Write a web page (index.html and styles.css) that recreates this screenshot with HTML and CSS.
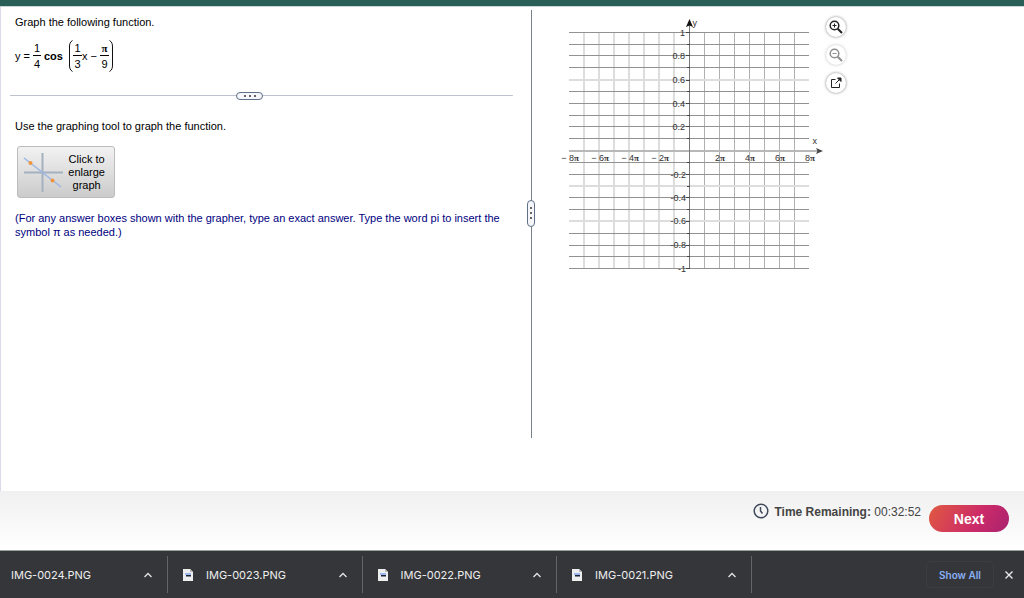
FILE: index.html
```html
<!DOCTYPE html>
<html lang="en">
<head>
    <meta charset="UTF-8">
    <meta name="viewport" content="width=device-width, initial-scale=1.0">
    <title>Graph the following function</title>
    <link rel="stylesheet" href="styles.css">
</head>
<body>
    <div class="topbar"></div>

    <main class="main">
        <section class="question">
            <p class="prompt">Graph the following function.</p>
            <div class="formula">
                <span>y =</span>
                <span class="frac"><span>1</span><span class="den">4</span></span>
                <b>cos</b>
                <span class="group">
                    <svg class="paren" viewBox="0 0 5 32"><path d="M4.5 .5C2 2 1.5 4 1.5 7v18c0 3 .5 5 3 6.500"/></svg>
                    <span class="frac"><span>1</span><span class="den">3</span></span>
                    <span>x −</span>
                    <span class="frac last"><span class="pi">π</span><span class="den">9</span></span>
                    <svg class="paren" viewBox="0 0 5 32"><path d="M.5 .5C3 2 3.500 4 3.500 7v18c0 3-.5 5-3 6.500"/></svg>
                </span>
            </div>

            <div class="split">
                <button class="handle" aria-label="Expand"><i></i><i></i><i></i></button>
            </div>

            <p class="prompt">Use the graphing tool to graph the function.</p>
            <button class="enlarge">
                <svg width="40" height="40" viewBox="0 0 40 40">
                    <path d="M19.500 1v39M1 20.500h39" stroke="#a3b1bf" stroke-width="2"/>
                    <path d="M1 6l37 29" stroke="#9db6e6" stroke-width="1.500"/>
                    <circle cx="7.500" cy="11" r="2" fill="#f0953a"/>
                    <circle cx="29.500" cy="28.500" r="2" fill="#f0953a"/>
                </svg>
                <span>Click to<br>enlarge<br>graph</span>
            </button>
            <p class="note">(For any answer boxes shown with the grapher, type an exact answer. Type the word pi to insert the symbol π as needed.)</p>
        </section>

        <div class="divider">
            <button class="handle vertical" aria-label="Resize panels"><i></i><i></i><i></i></button>
        </div>

        <section class="graph-panel">
            <svg class="graph" width="275" height="262" viewBox="555 14 275 262">
                <!-- vertical grid lines -->
                <path class="grid-soft" d="M584 32v236M599 32v236M614 32v236M629 32v236M644 32v236M659 32v236M674 32v236"/>
                <path class="grid-v" d="M704.500 32v236M719.500 32v236M734.500 32v236M749.500 32v236M764.500 32v236M779.500 32v236M794.500 32v236"/>
                <!-- horizontal grid lines -->
                <path class="grid-h" d="M569 32.500h240M569 44.500h240M569 55.500h240M569 67.500h240M569 91.500h240M569 103.500h240M569 115.500h240M569 126.500h240M569 138.500h240M569 162.500h240M569 174.500h240M569 197.500h240M569 209.500h240M569 233.500h240M569 245.500h240M569 256.500h240M569 268.500h240"/>
                <path class="grid-soft" d="M569 80h240M569 186h240M569 221h240"/>
                <!-- axes -->
                <path class="axis-x" d="M569 151h250"/>
                <path class="axis-y" d="M689.500 24v244"/>
                <path class="tick" d="M686 32.500h4M686 55.500h4M686 80.500h4M686 103.500h4M686 126.500h4M686 174.500h4M686 197.500h4M686 221.500h4M686 245.500h4M686 268.500h4M687 44.500h3M687 67.500h3M687 91.500h3M687 115.500h3M687 138.500h3M687 162.500h3M687 186.500h3M687 209.500h3M687 233.500h3M687 256.500h3"/>
                <path d="M689.500 19l-3.500 8 3.500-1.500 3.500 1.500z" fill="#111"/>
                <path d="M823 151l-7-3 1.500 3-1.500 3z" fill="#444"/>
                <g class="label-y">
                    <text x="685" y="36">1</text>
                    <text x="685" y="59">0.8</text>
                    <text x="685" y="83">0.6</text>
                    <text x="685" y="107">0.4</text>
                    <text x="685" y="130">0.2</text>
                    <text x="686" y="178">-0.2</text>
                    <text x="686" y="201">-0.4</text>
                    <text x="686" y="224">-0.6</text>
                    <text x="686" y="248">-0.8</text>
                    <text x="686" y="272">-1</text>
                    <text x="697" y="26">y</text>
                    <text x="817" y="144">x</text>
                </g>
                <g class="label-x">
                    <text x="570" y="161">− 8<tspan class="pi">π</tspan></text>
                    <text x="600" y="161">− 6<tspan class="pi">π</tspan></text>
                    <text x="630" y="161">− 4<tspan class="pi">π</tspan></text>
                    <text x="660" y="161">− 2<tspan class="pi">π</tspan></text>
                    <text x="720" y="161">2<tspan class="pi">π</tspan></text>
                    <text x="750" y="161">4<tspan class="pi">π</tspan></text>
                    <text x="780" y="161">6<tspan class="pi">π</tspan></text>
                    <text x="810" y="161">8<tspan class="pi">π</tspan></text>
                </g>
            </svg>
            <div class="tools">
                <button class="tool" aria-label="Zoom in">
                    <svg viewBox="0 0 14 14"><circle cx="5.500" cy="5.500" r="4.300"/><path d="M8.700 8.700l4.300 4.300" stroke-width="2"/><path d="M3.500 5.500h4M5.500 3.500v4" stroke-width="1"/></svg>
                </button>
                <button class="tool" aria-label="Zoom out" disabled>
                    <svg viewBox="0 0 14 14"><circle cx="5.500" cy="5.500" r="4.300"/><path d="M8.700 8.700l4.300 4.300" stroke-width="2"/><path d="M3.500 5.500h4" stroke-width="1"/></svg>
                </button>
                <button class="tool" aria-label="Open in new window">
                    <svg class="thin" viewBox="0 0 14 14"><path d="M6.500 3.500H2.500v8h8V7.500"/><path d="M6.500 7.500L11 3"/><path d="M8.500 2H12V5.500z" fill="#222"/></svg>
                </button>
            </div>
        </section>
    </main>

    <footer class="footer">
        <svg class="clock" width="16" height="16" viewBox="0 0 16 16"><circle cx="8" cy="8" r="6.800"/><path d="M7.500 4v4l2 2.500"/></svg>
        <span class="timer"><b>Time Remaining:</b> 00:32:52</span>
        <button class="next">Next</button>
    </footer>

    <div class="downloads">
        <div class="file">
            <span class="name">IMG-0024.PNG</span>
            <button class="more" aria-label="More"><svg viewBox="0 0 8 6"><path d="M.5 5L4 1.500 7.500 5"/></svg></button>
        </div>
        <div class="file">
            <svg class="doc" viewBox="0 0 10 12"><path d="M0 0h7l3 3v9H0z" fill="#eee"/><path d="M7 0v3h3z" fill="#bbb"/><path d="M2 4h6v2H2z" fill="#9db8ee"/><path d="M3 6h5v1.500H3z" fill="#1c2438"/></svg>
            <span class="name">IMG-0023.PNG</span>
            <button class="more" aria-label="More"><svg viewBox="0 0 8 6"><path d="M.5 5L4 1.500 7.500 5"/></svg></button>
        </div>
        <div class="file">
            <svg class="doc" viewBox="0 0 10 12"><path d="M0 0h7l3 3v9H0z" fill="#eee"/><path d="M7 0v3h3z" fill="#bbb"/><path d="M2 4h6v2H2z" fill="#9db8ee"/><path d="M3 6h5v1.500H3z" fill="#1c2438"/></svg>
            <span class="name">IMG-0022.PNG</span>
            <button class="more" aria-label="More"><svg viewBox="0 0 8 6"><path d="M.5 5L4 1.500 7.500 5"/></svg></button>
        </div>
        <div class="file">
            <svg class="doc" viewBox="0 0 10 12"><path d="M0 0h7l3 3v9H0z" fill="#eee"/><path d="M7 0v3h3z" fill="#bbb"/><path d="M2 4h6v2H2z" fill="#9db8ee"/><path d="M3 6h5v1.500H3z" fill="#1c2438"/></svg>
            <span class="name">IMG-0021.PNG</span>
            <button class="more" aria-label="More"><svg viewBox="0 0 8 6"><path d="M.5 5L4 1.500 7.500 5"/></svg></button>
        </div>
        <div class="actions">
            <button class="show-all">Show All</button>
            <button class="close" aria-label="Close"><svg viewBox="0 0 8 8"><path d="M.5 .5l7 7M7.500 .5l-7 7"/></svg></button>
        </div>
    </div>
</body>
</html>
```

FILE: styles.css
```css
* {
    box-sizing: border-box;
}
body {
    margin: 0;
    min-height: 100vh;
    display: flex;
    flex-direction: column;
    font-family: "Liberation Sans", Arial, sans-serif;
    font-size: 11px;
    line-height: 14px;
    color: #000;
    background: #fff;
}
button {
    font-family: inherit;
    padding: 0;
    border: none;
    background: none;
    cursor: pointer;
}
svg {
    display: block;
    fill: none;
    flex: none;
}
p {
    margin: 0;
}
.topbar {
    height: 7px;
    background: #2a5f57;
    border-bottom: 1px solid #ccd5dc;
}
.pi {
    font-family: "Liberation Serif", "Times New Roman", serif;
    font-weight: bold;
}

/* question */
.main {
    flex: 1;
    display: flex;
    border-left: 1px solid #d9dbe8;
}
.question {
    width: 51.8%;
    padding: 8px 18px 0 9px;
}
.prompt,
.note {
    padding-left: 5px;
}
.note {
    color: #000080;
    margin-top: 13px;
}
.formula {
    display: flex;
    align-items: center;
    gap: 3px;
    height: 32px;
    margin: 11px 0 0 5px;
}
.group {
    display: flex;
    align-items: center;
    margin-left: 2px;
}
.paren {
    width: 5px;
    height: 32px;
    stroke: #111;
}
.frac {
    display: flex;
    flex-direction: column;
    width: 8px;
    text-align: center;
}
.group .frac {
    width: 9px;
}
.group .last {
    margin-left: 3px;
}
.den {
    border-top: 1px solid #000;
    padding-top: 1px;
}
.split {
    display: flex;
    justify-content: center;
    align-items: center;
    margin: 19px 0;
    height: 9px;
    padding-right: 23px;
    background: linear-gradient(#bfc3cf, #bfc3cf) center / 100% 1px no-repeat;
}
.handle {
    display: flex;
    justify-content: center;
    align-items: center;
    gap: 3px;
    flex: none;
    width: 27px;
    height: 8px;
    background: #f4f6fa;
    border: 1px solid #5f7088;
    border-radius: 4px;
}
.handle i {
    width: 2px;
    height: 2px;
    background: #666;
}
.enlarge {
    display: flex;
    align-items: center;
    justify-content: space-between;
    width: 98px;
    height: 52px;
    margin: 13px 0 0 7px;
    padding: 0 9px 0 5px;
    font-size: 11px;
    line-height: 13px;
    color: #000;
    background: linear-gradient(#f2f2f2, #cbcbcb);
    border: 1px solid #bbb;
    border-radius: 3px;
}
.divider {
    width: 1px;
    margin: 3px 0 53px;
    display: flex;
    justify-content: center;
    align-items: center;
    background: #788190;
}
.handle.vertical {
    flex-direction: column;
    width: 8px;
    height: 27px;
    margin-bottom: 22px;
}

/* graph */
.graph-panel {
    flex: 1;
    display: flex;
    align-items: flex-start;
    padding: 7px 0 0 23px;
}
.grid-soft {
    stroke: #ddd;
    stroke-width: 2;
}
.grid-v {
    stroke: #b0b0b0;
}
.grid-h {
    stroke: #929292;
}
.axis-x {
    stroke: #b8b8b8;
    stroke-width: 2;
}
.axis-y {
    stroke: #777;
}
.tick {
    stroke: #444;
}
.graph text {
    font-size: 9px;
    fill: #333;
}
.label-y {
    text-anchor: end;
}
.label-x {
    text-anchor: middle;
}
.tools {
    display: flex;
    flex-direction: column;
    gap: 8px;
    margin: 3px 0 0 -4px;
}
.tool {
    display: flex;
    justify-content: center;
    align-items: center;
    width: 20px;
    height: 20px;
    border-radius: 50%;
    background: #fff;
    box-shadow: 0 0 3px rgba(0, 0, 0, 0.5);
}
.tool svg {
    width: 14px;
    height: 14px;
    stroke: #222;
    stroke-width: 1.5;
}
.tool .thin {
    stroke-width: 1;
}
.tool:disabled {
    opacity: 0.5;
}

/* footer */
.footer {
    display: flex;
    justify-content: flex-end;
    align-items: flex-start;
    height: 59px;
    padding: 12px 15px 0 0;
    background: linear-gradient(#f0f0f0, #fff);
}
.clock {
    stroke: #414b5c;
    stroke-width: 1.5;
}
.timer {
    margin: 2px 8px 0 5px;
    font-size: 12px;
    color: #444;
}
.next {
    width: 80px;
    height: 27px;
    margin-top: 2px;
    border-radius: 14px;
    font-size: 14px;
    font-weight: bold;
    color: #fff;
    background: linear-gradient(120deg, #e05a40, #cc2a69 60%, #a9236f);
}

/* downloads */
.downloads {
    display: flex;
    align-items: center;
    height: 48px;
    border-top: 1px solid #97a39c;
    background: #35363a;
    font-family: Inter, "Liberation Sans", sans-serif;
    color: #eee;
}
.file {
    display: flex;
    align-items: center;
    width: 19%;
    height: 37px;
    padding: 0 15px;
    border-right: 1px solid #626367;
}
.file:first-child {
    width: 168px;
    padding-left: 11px;
}
.doc {
    width: 10px;
    height: 12px;
    margin-right: 13px;
}
.name {
    flex: 1;
}
.more svg {
    width: 8px;
    height: 6px;
    stroke: #e4e4e4;
    stroke-width: 1.3;
}
.actions {
    display: flex;
    align-items: center;
    margin-left: auto;
    padding-right: 11px;
}
.show-all {
    width: 68px;
    height: 27px;
    margin-right: 11px;
    border: 1px solid #3c3d41;
    border-radius: 4px;
    font-size: 10px;
    font-weight: 600;
    color: #8ab0f5;
}
.close svg {
    width: 8px;
    height: 8px;
    stroke: #eee;
    stroke-width: 1.3;
}
```
